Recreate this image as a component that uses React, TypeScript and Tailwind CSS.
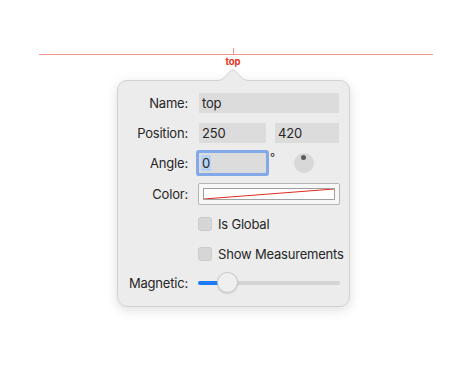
import React from "react";

function Label({ children }: { children: React.ReactNode }) {
  return <div className="w-[70px] shrink-0 text-right leading-[20px]">{children}</div>;
}

export default function App() {
  return (
    <div
      className="relative w-[474px] h-[379px] bg-white text-[13px] tracking-[-0.2px] text-[#262626] overflow-hidden"
      style={{ fontFamily: "Inter, 'Liberation Sans', sans-serif" }}
    >
      {/* guide line */}
      <div className="absolute left-[39px] top-[54px] w-[394px] h-px bg-[#f1958d]" />
      <div className="absolute left-[233px] top-[48px] w-px h-[6px] bg-[#f1958d]" />
      <div className="absolute left-[213px] top-[57px] w-[40px] text-center text-[9.5px] tracking-normal leading-[10px] font-bold text-[#e63320]">
        top
      </div>

      {/* popover */}
      <div className="absolute left-[117px] top-[80px] w-[233px] h-[227px] rounded-[10px] border border-[#d2d2d2] bg-[#ececec] shadow-[0_3px_12px_rgba(0,0,0,0.13)] pt-[12px]">
        <svg
          className="absolute left-[100px] top-[-12px]"
          width="30"
          height="14"
          viewBox="0 0 30 14"
        >
          <path d="M0,11.5 C7,11.5 11,0.8 15,0.8 C19,0.8 23,11.5 30,11.5 L30,14 L0,14 Z" fill="#ececec" />
          <path d="M0,11.5 C7,11.5 11,0.8 15,0.8 C19,0.8 23,11.5 30,11.5" fill="none" stroke="#d2d2d2" strokeWidth="1" />
        </svg>

        <div className="flex flex-col">
          {/* Name */}
          <div className="flex items-center h-[20px]">
            <Label>Name:</Label>
            <div className="ml-[11px] w-[140px] h-[20px] bg-[#dcdcdc] px-[3px] leading-[20px]">top</div>
          </div>

          {/* Position */}
          <div className="flex items-center h-[20px] mt-[10px]">
            <Label>Position:</Label>
            <div className="ml-[11px] flex gap-[9px]">
              <div className="w-[67px] h-[20px] bg-[#dcdcdc] px-[3px] leading-[20px]">250</div>
              <div className="w-[64px] h-[20px] bg-[#dcdcdc] px-[3px] leading-[20px]">420</div>
            </div>
          </div>

          {/* Angle */}
          <div className="flex items-center h-[20px] mt-[10px]">
            <Label>Angle:</Label>
            <div className="ml-[11px] flex items-start">
              <div className="w-[67px] h-[20px] bg-[#dcdcdc] pl-[2px] leading-[20px] ring-[3px] ring-[#84a9e8] rounded-[1px]">
                <span className="bg-[#b7d2f4] px-[1px]">0</span>
              </div>
              <div className="ml-[4px] text-[11px] leading-[11px] -mt-[1px]">°</div>
              <div className="relative ml-[19px] w-[20px] h-[20px] rounded-full bg-[#d8d8d8]">
                <div className="absolute left-[7.5px] top-[1.5px] w-[5px] h-[5px] rounded-full bg-[#5b5b5b]" />
              </div>
            </div>
          </div>

          {/* Color */}
          <div className="flex items-center h-[22px] mt-[10px]">
            <Label>Color:</Label>
            <div className="ml-[10px] w-[142px] h-[22px] border border-[#b4b4b4] bg-[#f7f7f7] rounded-[2px] p-[4px]">
              <div className="w-full h-full border border-[#a0a0a0] bg-white">
                <svg width="100%" height="100%" viewBox="0 0 130 10" preserveAspectRatio="none" className="block">
                  <line x1="0" y1="10" x2="130" y2="0" stroke="#e02a1e" strokeWidth="1" vectorEffect="non-scaling-stroke" />
                </svg>
              </div>
            </div>
          </div>

          {/* Is Global */}
          <div className="flex items-center h-[20px] mt-[9px]">
            <div className="w-[70px] shrink-0" />
            <div className="ml-[10px] flex items-center">
              <div className="w-[14px] h-[14px] rounded-[3px] bg-[#d6d6d6] border border-[#cbcbcb]" />
              <div className="ml-[6px] leading-[20px]">Is Global</div>
            </div>
          </div>

          {/* Show Measurements */}
          <div className="flex items-center h-[20px] mt-[10px]">
            <div className="w-[70px] shrink-0" />
            <div className="ml-[10px] flex items-center">
              <div className="w-[14px] h-[14px] rounded-[3px] bg-[#d6d6d6] border border-[#cbcbcb]" />
              <div className="ml-[6px] leading-[20px] whitespace-nowrap">Show Measurements</div>
            </div>
          </div>

          {/* Magnetic */}
          <div className="flex items-center h-[20px] mt-[9px]">
            <Label>Magnetic:</Label>
            <div className="relative ml-[10px] w-[142px] h-[22px] flex items-center">
              <div className="relative w-full h-[4px] rounded-full bg-[#d4d4d4]">
                <div className="absolute left-0 top-0 h-[4px] w-[22px] rounded-full bg-[#1a7cf5]" />
              </div>
              <div className="absolute left-[19px] top-[0px] w-[21px] h-[21px] rounded-full bg-[#efefef] border border-[#c6c6c6] shadow-[0_1px_2px_rgba(0,0,0,0.12)]" />
            </div>
          </div>
        </div>
      </div>
    </div>
  );
}
